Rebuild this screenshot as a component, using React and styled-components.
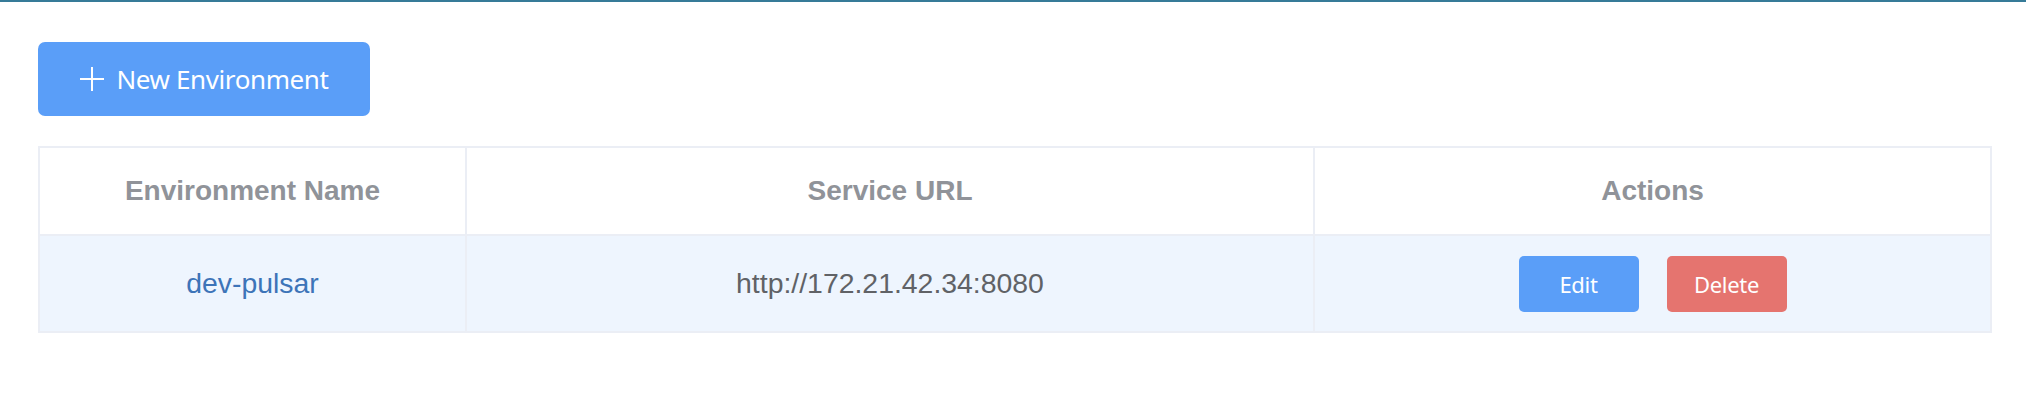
import React from 'react'
import styled, { createGlobalStyle } from 'styled-components'

const GlobalStyle = createGlobalStyle`
  html, body {
    margin: 0;
    padding: 0;
    background: #fff;
  }
  body {
    font-family: "Liberation Sans", Arial, sans-serif;
  }
`

const Page = styled.div`
  border-top: 2px solid #367b98;
  padding: 40px 34px 40px 38px;
`

const Toolbar = styled.div`
  display: flex;
  margin-bottom: 30px;
`

const Button = styled.button`
  display: inline-flex;
  align-items: center;
  justify-content: center;
  gap: ${props => props.big ? '13px' : '0'};
  width: ${props => props.big ? '332px' : '120px'};
  height: ${props => props.big ? '74px' : '56px'};
  padding: 0;
  border: none;
  border-radius: ${props => props.big ? '7px' : '5px'};
  background: ${props => props.danger ? '#e5746f' : '#5a9ef8'};
  color: #fff;
  font-family: "Noto Sans", "Open Sans", sans-serif;
  font-size: ${props => props.big ? '26px' : '22px'};
  letter-spacing: ${props => props.big ? '-0.4px' : '-0.3px'};
  cursor: pointer;
`

const Table = styled.table`
  width: 1954px;
  border-collapse: collapse;
  table-layout: fixed;
  border: 2px solid #ebeef5;
`

const Th = styled.th`
  height: 86px;
  padding: 0;
  border: 2px solid #ebeef5;
  background: #fff;
  color: #909399;
  font-size: 28px;
  font-weight: bold;
  text-align: center;
`

const Td = styled.td`
  height: 95px;
  padding: 0;
  border: 2px solid #ebeef5;
  background: #eef5fe;
  color: #606266;
  font-size: 28.4px;
  text-align: center;
`

const NameLink = styled.a`
  color: #3d74b8;
  text-decoration: none;
`

const Actions = styled.div`
  display: flex;
  justify-content: center;
  gap: 28px;
`

const PlusIcon = () => (
  <svg width="24" height="24" viewBox="0 0 24 24">
    <path d="M12 0v24M0 12h24" stroke="#fff" strokeWidth="2" fill="none" />
  </svg>
)

const envs = [
  { name: 'dev-pulsar', url: 'http://172.21.42.34:8080' }
]

export default function App() {
  return (
    <Page>
      <GlobalStyle />
      <Toolbar>
        <Button big>
          <PlusIcon />
          <span>New Environment</span>
        </Button>
      </Toolbar>
      <Table>
        <colgroup>
          <col style={{ width: 427 }} />
          <col style={{ width: 848 }} />
          <col />
        </colgroup>
        <thead>
          <tr>
            <Th>Environment Name</Th>
            <Th>Service URL</Th>
            <Th>Actions</Th>
          </tr>
        </thead>
        <tbody>
          {envs.map(env => (
            <tr key={env.name}>
              <Td><NameLink href="#">{env.name}</NameLink></Td>
              <Td>{env.url}</Td>
              <Td>
                <Actions>
                  <Button>Edit</Button>
                  <Button danger>Delete</Button>
                </Actions>
              </Td>
            </tr>
          ))}
        </tbody>
      </Table>
    </Page>
  )
}
